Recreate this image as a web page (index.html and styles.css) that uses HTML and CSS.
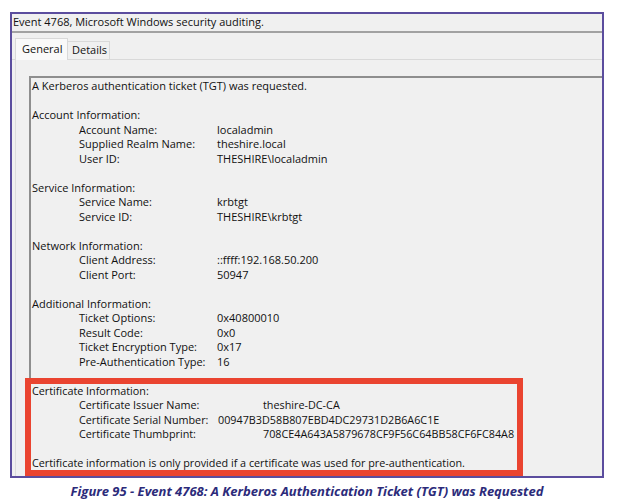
FILE: index.html
```html
<!DOCTYPE html>
<html>
<head>
<meta charset="utf-8">
<link rel="stylesheet" href="styles.css">
</head>
<body>
<div class="page">
  <div class="window">
    <div class="titlebar">Event 4768, Microsoft Windows security auditing.</div>
    <div class="tabs">
      <div class="tab active">General</div>
      <div class="tab">Details</div>
    </div>
    <div class="tabpage">
      <div class="textbox">
        <div class="line">A Kerberos authentication ticket (TGT) was requested.</div>
        <div class="section">
          <div class="line">Account Information:</div>
          <div class="fields">
            <span>Account Name:</span><span>localadmin</span>
            <span>Supplied Realm Name:</span><span>theshire.local</span>
            <span>User ID:</span><span>THESHIRE\localadmin</span>
          </div>
        </div>
        <div class="section">
          <div class="line">Service Information:</div>
          <div class="fields">
            <span>Service Name:</span><span>krbtgt</span>
            <span>Service ID:</span><span>THESHIRE\krbtgt</span>
          </div>
        </div>
        <div class="section">
          <div class="line">Network Information:</div>
          <div class="fields">
            <span>Client Address:</span><span>::ffff:192.168.50.200</span>
            <span>Client Port:</span><span>50947</span>
          </div>
        </div>
        <div class="section">
          <div class="line">Additional Information:</div>
          <div class="fields">
            <span>Ticket Options:</span><span>0x40800010</span>
            <span>Result Code:</span><span>0x0</span>
            <span>Ticket Encryption Type:</span><span>0x17</span>
            <span>Pre-Authentication Type:</span><span>16</span>
          </div>
        </div>
        <div class="cert">
          <div class="cline">Certificate Information:</div>
          <div class="cfields">
            <span>Certificate Issuer Name:</span><span class="tabbed">theshire-DC-CA</span>
            <span>Certificate Serial Number:</span><span>00947B3D58B807EBD4DC29731D2B6A6C1E</span>
            <span>Certificate Thumbprint:</span><span class="tabbed">708CE4A643A5879678CF9F56C64BB58CF6FC84A8</span>
          </div>
          <div class="cline cnote">Certificate information is only provided if a certificate was used for pre-authentication.</div>
        </div>
      </div>
    </div>
  </div>
  <div class="caption">Figure 95 - Event 4768: A Kerberos Authentication Ticket (TGT) was Requested</div>
</div>
</body>
</html>
```

FILE: styles.css
```css
html, body {
  margin: 0;
  padding: 0;
  background: #ffffff;
}

body {
  font-family: "Open Sans", "Noto Sans", sans-serif;
  font-size: 11px;
  color: #111;
}

.page {
  padding: 12px 0 0 10px;
  width: 594px;
}

.window {
  box-sizing: border-box;
  width: 594px;
  height: 466px;
  border: 2px solid #5b4d9e;
  background: #f0f0f0;
  overflow: hidden;
  display: flex;
  flex-direction: column;
}

.titlebar {
  height: 17px;
  line-height: 16px;
  padding-left: 1px;
  border-bottom: 2px solid #a2a2a2;
  white-space: nowrap;
}

.tabs {
  height: 26px;
  border-bottom: 1px solid #d9d9d9;
  display: flex;
  align-items: flex-end;
  padding-left: 3px;
}

.tab {
  box-sizing: border-box;
  height: 18px;
  line-height: 16px;
  padding: 0 4px;
  width: 42px;
  border: 1px solid #d9d9d9;
  border-bottom: none;
  border-left: none;
  background: #f0f0f0;
}

.tab.active {
  width: 53px;
  height: 22px;
  line-height: 20px;
  padding: 0 6px;
  border-left: 1px solid #d9d9d9;
  background: #f9f9f9;
  margin-bottom: -1px;
  position: relative;
}

.tabpage {
  flex: 1;
  margin-left: 3px;
  border-left: 1px solid #dcdcdc;
  padding: 16px 0 0 13px;
  display: flex;
  flex-direction: column;
}

.textbox {
  flex: 1;
  border-top: 2px solid #8e8e8e;
  border-left: 2px solid #8e8e8e;
  padding: 1px 0 0 1px;
  line-height: 14.5px;
  white-space: nowrap;
}

.line {
  height: 14.5px;
}

.section {
  margin-top: 14.5px;
}

.fields {
  display: grid;
  grid-template-columns: 138px auto;
  padding-left: 47px;
}

.cert {
  box-sizing: border-box;
  width: 498px;
  height: 98px;
  margin: 8.75px 0 0 -7px;
  border: 6px solid #ea4430;
  padding: 0 0 0 1px;
  background: #f0f0f0;
  font-size: 10.8px;
  line-height: 14.5px;
}

.cline {
  height: 14.5px;
}

.cnote {
  margin-top: 14.5px;
}

.cfields {
  display: grid;
  grid-template-columns: 139px auto;
  padding-left: 47px;
}

.tabbed {
  padding-left: 45px;
}

.caption {
  margin-top: 5px;
  text-align: center;
  font-family: "Open Sans", sans-serif;
  font-weight: bold;
  font-style: italic;
  font-size: 13px;
  line-height: 16px;
  color: #2c2b7a;
  white-space: nowrap;
}
```
